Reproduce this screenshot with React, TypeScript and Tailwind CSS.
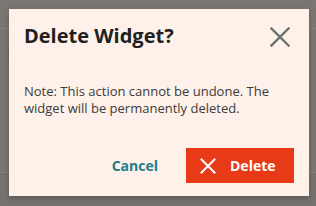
import React from "react";

export default function App() {
  return (
    <div
      className="relative w-[316px] h-[206px] overflow-hidden bg-[#7a7571]"
      style={{ fontFamily: '"Open Sans", sans-serif' }}
    >
      <div className="h-[29px] border-b border-[#86817d] bg-[#7b7672]" />
      <div className="h-[143px] pl-[8px] pt-[21px]">
        <div className="w-[2px] h-[11px] bg-[#8a6a4c]" />
      </div>
      <div className="h-[34px] border-t border-[#85807c] bg-[#767270]" />

      <div className="absolute left-[9px] top-[9px] w-[300px] h-[187px] bg-[#fdf1ea] shadow-[0_2px_6px_rgba(0,0,0,0.25)] flex flex-col">
        <div className="flex items-start justify-between pl-[15px] pr-[19px] pt-[13px]">
          <h2 className="text-[20px] leading-[28px] font-bold text-[#231f1f]">
            Delete Widget?
          </h2>
          <button className="mt-[5px] w-[20px] h-[20px] flex items-center justify-center">
            <svg width="20" height="20" viewBox="0 0 20 20">
              <path d="M1.5 1.5 L18.5 18.5 M18.5 1.5 L1.5 18.5" stroke="#6b716f" strokeWidth="2.4" strokeLinecap="square" />
            </svg>
          </button>
        </div>
        <p className="mt-[33px] pl-[15px] pr-[20px] text-[13px] leading-[17px] text-[#3e3b3a]">
          Note: This action cannot be undone. The widget will be permanently deleted.
        </p>
        <div className="mt-auto mb-[13px] flex items-center justify-end pr-[15px] gap-[28px]">
          <button className="text-[14px] font-bold text-[#1b7e8a] leading-[20px]">Cancel</button>
          <button className="w-[108px] h-[35px] bg-[#e83a16] flex items-center pl-[14px] gap-[14px] text-white text-[14px] font-bold">
            <svg width="16" height="16" viewBox="0 0 16 16">
              <path d="M1.5 1.5 L14.5 14.5 M14.5 1.5 L1.5 14.5" stroke="#ffffff" strokeWidth="2" strokeLinecap="square" />
            </svg>
            <span>Delete</span>
          </button>
        </div>
      </div>
    </div>
  );
}
